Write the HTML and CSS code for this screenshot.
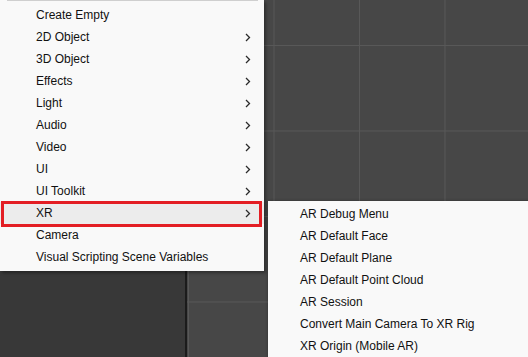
FILE: index.html
```html
<!DOCTYPE html>
<html lang="en">
<head>
    <title>GameObject Menu</title>
    <link rel="stylesheet" href="styles.css">
</head>
<body>

<div class="workspace">
    <div class="hierarchy"></div>
    <div class="scene"></div>
</div>

<div class="menu main-menu">
    <div class="separator"></div>
    <div class="item">Create Empty</div>
    <div class="item sub">2D Object</div>
    <div class="item sub">3D Object</div>
    <div class="item sub">Effects</div>
    <div class="item sub">Light</div>
    <div class="item sub">Audio</div>
    <div class="item sub">Video</div>
    <div class="item sub">UI</div>
    <div class="item sub">UI Toolkit</div>
    <div class="item sub active">XR</div>
    <div class="item">Camera</div>
    <div class="item">Visual Scripting Scene Variables</div>
</div>

<div class="menu sub-menu">
    <div class="item">AR Debug Menu</div>
    <div class="item">AR Default Face</div>
    <div class="item">AR Default Plane</div>
    <div class="item">AR Default Point Cloud</div>
    <div class="item">AR Session</div>
    <div class="item">Convert Main Camera To XR Rig</div>
    <div class="item">XR Origin (Mobile AR)</div>
</div>

<script>
    // Add the little arrow to every item that opens a submenu
    document.querySelectorAll('.item.sub').forEach(item => {
        item.insertAdjacentHTML('beforeend',
            '<svg class="arrow" width="6" height="9" viewBox="0 0 6 9">' +
            '<path d="M1 1 L4.5 4.5 L1 8" fill="none" stroke="#2b2b2b" stroke-width="1.3"/></svg>');
    });
</script>
</body>
</html>
```

FILE: styles.css
```css
body {
    margin: 0;
    width: 528px;
    height: 357px;
    overflow: hidden;
    position: relative;
    font-family: "Liberation Sans", Arial, sans-serif;
    font-size: 12px;
    color: #111;
}
.workspace {
    display: flex;
    height: 100%;
}
.hierarchy {
    width: 185px;
    background: #383838;
    border-right: 2px solid #1b1b1b;
}
.scene {
    flex: 1;
    background-color: #474747;
    background-image:
        linear-gradient(to right, #585858 1px, transparent 1px),
        linear-gradient(to bottom, #585858 1px, transparent 1px);
    background-size: 85.5px 85.5px;
    background-position: 1px 45px;
}
.menu {
    position: absolute;
    background: #f9f9f9;
}
.main-menu {
    left: 0;
    top: 0;
    width: 264px;
    padding: 4px 0 3px;
    box-shadow: 2px 2px 3px rgba(0, 0, 0, 0.35);
}
.separator {
    position: absolute;
    top: 0;
    left: 7px;
    right: 6px;
    height: 1px;
    background: #cfcfcf;
}
.sub-menu {
    left: 268px;
    top: 201px;
    right: -10px;
    bottom: -10px;
    padding-top: 2px;
    box-shadow: 0 0 3px rgba(0, 0, 0, 0.3);
}
.item {
    height: 22px;
    line-height: 22px;
    padding-left: 36px;
    position: relative;
    white-space: nowrap;
}
.sub-menu .item {
    padding-left: 32px;
}
.arrow {
    position: absolute;
    left: 245px;
    top: 7px;
}
.item.active {
    background: #ececec;
}
.item.active::after {
    content: "";
    position: absolute;
    left: 1px;
    right: 2px;
    top: -1px;
    bottom: -3px;
    border: 3px solid #e31e24;
}
```
